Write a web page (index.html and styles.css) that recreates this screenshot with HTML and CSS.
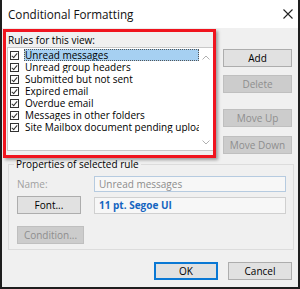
FILE: index.html
```html
<!DOCTYPE html>
<html lang="en">
<head>
    <meta charset="UTF-8">
    <title>Conditional Formatting</title>
    <link rel="stylesheet" href="styles.css">
</head>
<body>
    <div class="dialog">
        <div class="titlebar">
            <span class="title">Conditional Formatting</span>
            <svg class="close" width="10" height="10" viewBox="0 0 10 10">
                <path d="M0.5 0.5 L9.5 9.5 M9.5 0.5 L0.5 9.5" stroke="#222" stroke-width="1.1" fill="none"/>
            </svg>
        </div>
        <div class="content">
            <div class="top">
                <div class="rules">
                    <div class="label">Rules for this view:</div>
                    <div class="listbox">
                        <ul class="list">
                            <li class="selected"><span class="check"></span><span class="name">Unread messages</span></li>
                            <li><span class="check"></span><span class="name">Unread group headers</span></li>
                            <li><span class="check"></span><span class="name">Submitted but not sent</span></li>
                            <li><span class="check"></span><span class="name">Expired email</span></li>
                            <li><span class="check"></span><span class="name">Overdue email</span></li>
                            <li><span class="check"></span><span class="name">Messages in other folders</span></li>
                            <li><span class="check"></span><span class="name">Site Mailbox document pending upload</span></li>
                        </ul>
                        <div class="scrollbar">
                            <svg width="8" height="5" viewBox="0 0 8 5"><path d="M0.5 4.5 L4 1 L7.5 4.5" stroke="#b0b0b0" fill="none"/></svg>
                            <svg width="8" height="5" viewBox="0 0 8 5"><path d="M0.5 0.5 L4 4 L7.5 0.5" stroke="#b0b0b0" fill="none"/></svg>
                        </div>
                    </div>
                </div>
                <div class="side">
                    <button class="btn add">Add</button>
                    <button class="btn delete" disabled>Delete</button>
                    <button class="btn move-up" disabled>Move Up</button>
                    <button class="btn move-down" disabled>Move Down</button>
                </div>
            </div>
            <fieldset class="props">
                <legend>Properties of selected rule</legend>
                <div class="row">
                    <span class="field-label">Name:</span>
                    <div class="field name-field">Unread messages</div>
                </div>
                <div class="row font-row">
                    <button class="btn font-btn">Font...</button>
                    <div class="field font-field">11 pt. Segoe UI</div>
                </div>
                <button class="btn condition" disabled>Condition...</button>
            </fieldset>
            <div class="actions">
                <button class="btn ok">OK</button>
                <button class="btn">Cancel</button>
            </div>
        </div>
    </div>
</body>
</html>
```

FILE: styles.css
```css
body {
    margin: 0;
    font-family: 'Open Sans', 'Noto Sans', Arial, sans-serif;
    font-size: 10px;
    color: #000;
}

.dialog {
    width: 300px;
    height: 289px;
    box-sizing: border-box;
    border: 2px solid #1e1e1e;
    border-top: none;
    display: flex;
    flex-direction: column;
    background: #f0f0f0;
}

.titlebar {
    height: 28px;
    background: #fff;
    display: flex;
    align-items: center;
    justify-content: space-between;
    padding: 0 5px 0 6px;
    flex-shrink: 0;
}

.title {
    font-size: 11.7px;
    color: #111;
}

.content {
    flex: 1;
    display: flex;
    flex-direction: column;
    padding: 1px 6px 0 1px;
}

.top {
    display: flex;
    align-items: flex-start;
}

.rules {
    width: 213px;
    height: 129px;
    box-sizing: border-box;
    border: 3px solid #f0141e;
    box-shadow: 2px 2px 3px rgba(0, 0, 0, 0.35);
    padding: 2px 0 4px 1px;
    display: flex;
    flex-direction: column;
}

.label {
    height: 13px;
    line-height: 13px;
    padding-left: 1px;
}

.listbox {
    flex: 1;
    display: flex;
    background: #fff;
    border: 1px solid #c8c8c8;
    border-right: none;
    min-width: 0;
}

.list {
    flex: 1;
    min-width: 0;
    list-style: none;
    margin: 0;
    padding: 1px 0 0 2px;
    line-height: 12px;
}

.list li {
    height: 12px;
    display: flex;
    align-items: center;
}

.check {
    width: 7px;
    height: 7px;
    border: 1px solid #333;
    margin-right: 5px;
    position: relative;
    flex-shrink: 0;
}

.check::after {
    content: '';
    position: absolute;
    left: 2px;
    top: 0;
    width: 2px;
    height: 5px;
    border: solid #333;
    border-width: 0 1px 1px 0;
    transform: rotate(40deg);
}

.name {
    flex: 1;
    min-width: 0;
    height: 12px;
    line-height: 12px;
    padding-left: 1px;
    white-space: nowrap;
    overflow: hidden;
    box-sizing: border-box;
}

.selected .name {
    background: #a6d0f2;
    outline: 1px dotted #555;
    outline-offset: -1px;
}

.scrollbar {
    width: 14px;
    flex-shrink: 0;
    display: flex;
    flex-direction: column;
    align-items: center;
    justify-content: space-between;
    padding: 7px 0 5px;
}

.side {
    display: flex;
    flex-direction: column;
    margin-left: 7px;
    padding-top: 20px;
}

.btn {
    font-family: inherit;
    font-size: 10px;
    color: #000;
    background: #e1e1e1;
    border: 1px solid #adadad;
    height: 18px;
    padding: 0;
    box-sizing: border-box;
}

.btn:disabled {
    background: #cccccc;
    border-color: #bfbfbf;
    color: #8e8e8e;
}

.side .btn {
    width: 69px;
}

.delete {
    margin-top: 8px;
}

.move-up {
    margin-top: 16px;
}

.move-down {
    margin-top: 9px;
}

.props {
    margin: 0 0 0 5px;
    width: 286px;
    box-sizing: border-box;
    border: 1px solid #dcdcdc;
    padding: 6px 7px 5px 8px;
    min-width: 0;
}

.props legend {
    padding: 0 2px;
    margin-left: -3px;
    line-height: 12px;
}

.row {
    display: flex;
    align-items: center;
}

.field-label {
    width: 77px;
    color: #a0a0a0;
}

.field {
    width: 192px;
    height: 16px;
    box-sizing: border-box;
    line-height: 14px;
    padding-left: 4px;
    border: 1px solid #b6cbe0;
    background: #f7f7f7;
}

.name-field {
    color: #8c8c8c;
}

.font-row {
    margin-top: 4px;
}

.font-btn {
    width: 64px;
    margin-right: 13px;
}

.font-field {
    height: 17px;
    line-height: 15px;
    border-color: #d0d0d0;
    color: #1565c0;
    font-weight: bold;
}

.condition {
    width: 67px;
    margin-top: 12px;
}

.actions {
    display: flex;
    justify-content: flex-end;
    gap: 10px;
    margin-top: 12px;
}

.actions .btn {
    width: 64px;
}

.ok {
    border: 2px solid #0a78d4;
}
```
